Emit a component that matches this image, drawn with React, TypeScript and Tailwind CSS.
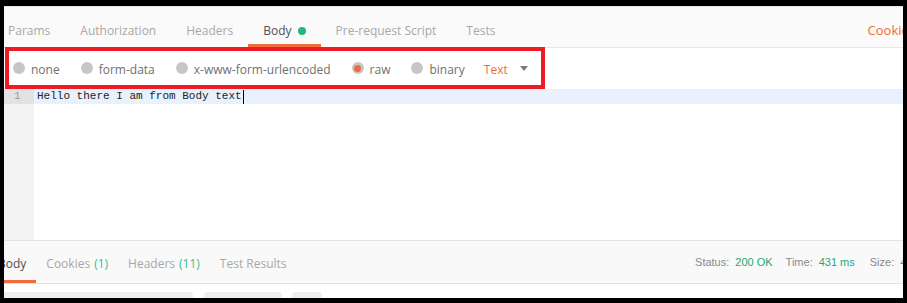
import React from "react";

const tabs = ["Params", "Authorization", "Headers", "Body", "Pre-request Script", "Tests"];

const bodyTypes = [
  { label: "none" },
  { label: "form-data" },
  { label: "x-www-form-urlencoded" },
  { label: "raw", active: true },
  { label: "binary" },
];

function Radio({ active }: { active?: boolean }) {
  return (
    <span className="w-[12px] h-[12px] rounded-full bg-[#c6c6c6] flex items-center justify-center shrink-0">
      {active && <span className="w-[7px] h-[7px] rounded-full bg-[#f26b3a]" />}
    </span>
  );
}

export default function App() {
  return (
    <div className="w-[907px] h-[303px] bg-black pt-[6px] pb-[5px] px-[4px] overflow-hidden">
      <div
        className="h-full bg-white flex flex-col overflow-hidden border-t border-[#e4e4e4]"
        style={{ fontFamily: '"Open Sans", sans-serif' }}
      >
        {/* Request tabs */}
        <div className="h-[41px] shrink-0 bg-[#fafafa] border-b border-[#e6e6e6] flex text-[12px]">
          <div className="flex -ml-[11px] h-full">
            {tabs.map((t) => {
              const active = t === "Body";
              return (
                <div
                  key={t}
                  className={`px-[15px] h-full flex items-center pt-[11px] border-b-[3px] ${
                    active ? "border-[#f26b3a] text-[#505050]" : "border-transparent text-[#a8a8a8]"
                  }`}
                >
                  {t}
                  {active && <span className="ml-[6px] w-[8px] h-[8px] rounded-full bg-[#26b47f]" />}
                </div>
              );
            })}
          </div>
          <div className="ml-auto -mr-[12px] flex items-center pt-[8px] text-[#f26b3a] text-[13px]">Cookies</div>
        </div>

        {/* Body type selector with red highlight */}
        <div className="h-[41px] shrink-0 pl-px">
          <div className="-mt-px w-[540px] h-[42px] border-4 border-[#ed1c24] flex items-center pl-[4px] text-[12px] text-[#707070]">
            {bodyTypes.map((b) => (
              <div key={b.label} className="flex items-center mr-[21px]">
                <Radio active={b.active} />
                <span className="ml-[6px] pt-[3px]">{b.label}</span>
              </div>
            ))}
            <span className="text-[#f26b3a] pt-[3px] -ml-[2px]">Text</span>
            <svg className="ml-[12px] mt-[1px]" width="8" height="5" viewBox="0 0 8 5">
              <path d="M0 0h8L4 5z" fill="#7a7a7a" />
            </svg>
          </div>
        </div>

        {/* Editor */}
        <div className="flex-1 flex min-h-0">
          <div className="w-[30px] bg-[#f4f4f4] shrink-0">
            <div
              className="h-[15px] bg-[#e2e2e2] text-[#9a9a9a] text-[11px] leading-[15px] pl-[10px]"
              style={{ fontFamily: '"Liberation Mono", monospace' }}
            >
              1
            </div>
          </div>
          <div className="flex-1">
            <div
              className="h-[15px] bg-[#e8f1fc] text-[11px] leading-[15px] text-[#222] pl-[3px] flex items-center"
              style={{ fontFamily: '"Liberation Mono", monospace' }}
            >
              Hello there I am from Body text
              <span className="w-px h-[14px] bg-black ml-px" />
            </div>
          </div>
        </div>

        {/* Response tabs */}
        <div className="h-[44px] shrink-0 bg-[#f9f9f9] border-t border-b border-[#e2e2e2] flex items-stretch text-[12px]">
          <div className="flex -ml-[16px] h-full">
            <div className="px-[10px] flex items-center pt-[7px] border-b-[3px] border-[#f26b3a] text-[#505050]">Body</div>
            <div className="px-[10px] flex items-center pt-[7px] border-b-[3px] border-transparent text-[#a8a8a8]">
              Cookies <span className="ml-[4px] text-[#3dbb8a]">(1)</span>
            </div>
            <div className="px-[10px] flex items-center pt-[7px] border-b-[3px] border-transparent text-[#a8a8a8]">
              Headers <span className="ml-[4px] text-[#3dbb8a]">(11)</span>
            </div>
            <div className="px-[10px] flex items-center pt-[7px] border-b-[3px] border-transparent text-[#a8a8a8]">Test Results</div>
          </div>
          <div
            className="ml-auto flex items-center text-[11px] text-[#8a8a8a] -mr-[26px] pt-[1px]"
            style={{ fontFamily: '"Liberation Sans", Arial, sans-serif' }}
          >
            <span>Status:</span>
            <span className="ml-[6px] text-[#27a676]">200 OK</span>
            <span className="ml-[13px]">Time:</span>
            <span className="ml-[6px] text-[#27a676]">431 ms</span>
            <span className="ml-[15px]">Size:</span>
            <span className="ml-[6px] text-[#27a676]">431 B</span>
          </div>
        </div>

        {/* Response toolbar (cut off) */}
        <div className="h-[14px] shrink-0 flex pt-[8px] -ml-[4px]">
          <div className="w-[193px] h-[10px] rounded-[4px] bg-[#eeeeee]" />
          <div className="ml-[11px] w-[78px] h-[10px] rounded-[4px] bg-[#eeeeee]" />
          <div className="ml-[10px] w-[30px] h-[10px] rounded-[4px] bg-[#eeeeee]" />
        </div>
      </div>
    </div>
  );
}
